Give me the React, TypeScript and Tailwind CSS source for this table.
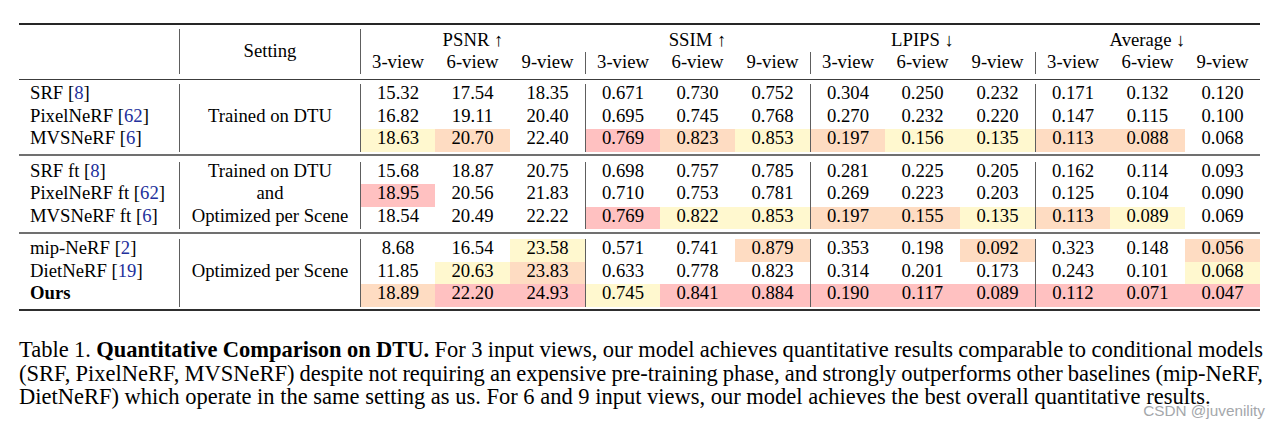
import React from "react";

type Hl = "r" | "o" | "y" | "";

interface Row {
  name: string;
  cite?: string;
  bold?: boolean;
  values: [string, Hl][];
}

const hlClass: Record<Hl, string> = {
  r: "bg-[#ffc1c1]",
  o: "bg-[#fedcc2]",
  y: "bg-[#fff8cf]",
  "": "",
};

const parse = (s: string): [string, Hl][] =>
  s.split(" ").map((tok) => {
    const [v, c] = tok.split(":");
    return [v, (c || "") as Hl];
  });

const groups: { setting: string[]; rows: Row[] }[] = [
  {
    setting: ["", "Trained on DTU"],
    rows: [
      { name: "SRF", cite: "8", values: parse("15.32 17.54 18.35 0.671 0.730 0.752 0.304 0.250 0.232 0.171 0.132 0.120") },
      { name: "PixelNeRF", cite: "62", values: parse("16.82 19.11 20.40 0.695 0.745 0.768 0.270 0.232 0.220 0.147 0.115 0.100") },
      {
        name: "MVSNeRF",
        cite: "6",
        values: parse("18.63:y 20.70:o 22.40 0.769:r 0.823:o 0.853:y 0.197:o 0.156:y 0.135:y 0.113:o 0.088:o 0.068"),
      },
    ],
  },
  {
    setting: ["Trained on DTU", "and", "Optimized per Scene"],
    rows: [
      { name: "SRF ft", cite: "8", values: parse("15.68 18.87 20.75 0.698 0.757 0.785 0.281 0.225 0.205 0.162 0.114 0.093") },
      { name: "PixelNeRF ft", cite: "62", values: parse("18.95:r 20.56 21.83 0.710 0.753 0.781 0.269 0.223 0.203 0.125 0.104 0.090") },
      {
        name: "MVSNeRF ft",
        cite: "6",
        values: parse("18.54 20.49 22.22 0.769:r 0.822:y 0.853:y 0.197:o 0.155:o 0.135:y 0.113:o 0.089:y 0.069"),
      },
    ],
  },
  {
    setting: ["", "Optimized per Scene"],
    rows: [
      { name: "mip-NeRF", cite: "2", values: parse("8.68 16.54 23.58:y 0.571 0.741 0.879:o 0.353 0.198 0.092:o 0.323 0.148 0.056:o") },
      { name: "DietNeRF", cite: "19", values: parse("11.85 20.63:y 23.83:o 0.633 0.778 0.823 0.314 0.201 0.173 0.243 0.101 0.068:y") },
      {
        name: "Ours",
        bold: true,
        values: parse("18.89:o 22.20:r 24.93:r 0.745:y 0.841:r 0.884:r 0.190:r 0.117:r 0.089:r 0.112:r 0.071:r 0.047:r"),
      },
    ],
  },
];

const metrics = ["PSNR ↑", "SSIM ↑", "LPIPS ↓", "Average ↓"];
const views = ["3-view", "6-view", "9-view"];
const cols = "grid grid-cols-[160px_181px_repeat(12,75px)]";
const vline = "border-l border-[#5e5e5e]";

function Header() {
  return (
    <div className={`${cols} grid-rows-[23px_22px]`}>
      <div className="row-span-2" />
      <div className={`row-span-2 ${vline} flex items-center justify-center pb-[2px] leading-[20px]`}>Setting</div>
      {metrics.map((m, i) => (
        <div key={m} className={`col-span-3 text-center leading-[22px] ${i === 0 ? vline : ""}`}>
          {m}
        </div>
      ))}
      {metrics.map((m, i) =>
        views.map((v, j) => (
          <div key={m + v} className={`text-center leading-[20px] ${j === 0 ? vline : ""}`}>
            {v}
          </div>
        ))
      )}
    </div>
  );
}

function Group({ setting, rows }: { setting: string[]; rows: Row[] }) {
  return (
    <div className={`${cols} auto-rows-[22.5px]`}>
      {rows.map((row, ri) => (
        <React.Fragment key={row.name}>
          <div className={`pl-[11px] leading-[18px] ${row.bold ? "font-bold" : ""}`}>
            {row.name}
            {row.cite && (
              <>
                {" "}[<span className="text-[#22309c]">{row.cite}</span>]
              </>
            )}
          </div>
          {ri === 0 && (
            <div className={`row-span-3 ${vline} flex flex-col items-center`}>
              {setting.map((s, si) => (
                <div key={si} className="h-[22.5px] leading-[18px] whitespace-nowrap">
                  {s}
                </div>
              ))}
            </div>
          )}
          {row.values.map(([v, c], vi) => (
            <div
              key={vi}
              className={`text-center leading-[18px] ${hlClass[c]} ${vi % 3 === 0 ? vline : ""}`}
            >
              {v}
            </div>
          ))}
        </React.Fragment>
      ))}
    </div>
  );
}

export default function App() {
  return (
    <div className="relative h-[431px] w-[1280px] overflow-hidden bg-white text-black font-['Liberation_Serif',serif]">
      <div className="px-[19px] pt-[23px] text-[18.7px]">
        <div className="h-[2px] w-[1241px] bg-[#262626]" />
        <div className="mt-[4px]">
          <Header />
        </div>
        <div className="mt-[5px] h-[1px] w-[1241px] bg-[#3c3c3c]" />
        <div className="mt-[4px]">
          <Group {...groups[0]} />
        </div>
        <div className="mt-[2px] h-[2px] w-[1241px] bg-[#707070]" />
        <div className="mt-[6px]">
          <Group {...groups[1]} />
        </div>
        <div className="mt-[3px] h-[2px] w-[1241px] bg-[#707070]" />
        <div className="mt-[5px]">
          <Group {...groups[2]} />
        </div>
        <div className="mt-[2.5px] h-[2px] w-[1241px] bg-[#2e2e2e]" />
      </div>

      {/* caption: first two lines are justified edge to edge */}
      <div className="mt-[27px] ml-[19px] w-[1244px] text-[22.5px] leading-[23.5px]">
        <div className="text-justify [text-align-last:justify] [word-spacing:-1.2px]">
          Table 1. <span className="font-bold">Quantitative Comparison on DTU.</span> For 3 input views, our model
          achieves quantitative results comparable to conditional models
        </div>
        <div className="text-justify [text-align-last:justify] [word-spacing:-1.2px]">
          (SRF, PixelNeRF, MVSNeRF) despite not requiring an expensive pre-training phase, and strongly outperforms other
          baselines (mip-NeRF,
        </div>
        <div className="whitespace-nowrap">
          DietNeRF) which operate in the same setting as us. For 6 and 9 input views, our model achieves the best overall
          quantitative results.
        </div>
      </div>

      <div className="absolute right-[15px] top-[402px] font-['Liberation_Sans',sans-serif] text-[15.3px] leading-[18px] text-[#a4a7ab]">
        CSDN @juvenility
      </div>
    </div>
  );
}
